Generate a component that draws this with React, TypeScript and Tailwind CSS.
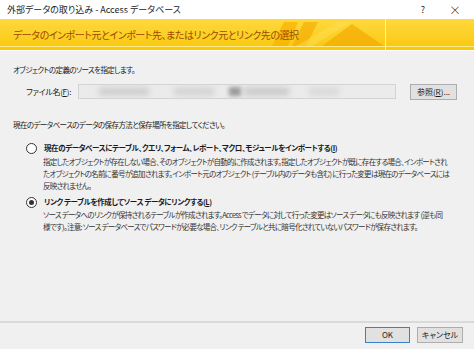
import React from 'react'

const jp = "font-['Noto_Sans_CJK_JP','Noto_Sans',sans-serif] [font-feature-settings:'palt']"

function Radio({ checked }: { checked: boolean }) {
    return (
        <div className="h-[11px] w-[11px] rounded-full border border-[#333] bg-white flex items-center justify-center shrink-0">
            {checked && <div className="h-[5px] w-[5px] rounded-full bg-[#333]" />}
        </div>
    )
}

function Banner() {
    return (
        <div className="relative h-[31px] bg-gradient-to-b from-[#ffd83a] to-[#f9c800] overflow-hidden">
            <svg className="absolute inset-0" width="474" height="31" viewBox="0 0 474 31">
                <polygon points="284,3 298,3 288,27 272,27" fill="#f7b000" opacity="0.7" />
                <polygon points="304,3 318,3 306,27 292,27" fill="#f4a800" opacity="0.6" />
                <polygon points="296,27 338,3 352,3 312,27" fill="#ffe15a" opacity="0.45" />
                <polygon points="322,27 352,5 384,27" fill="#f3a800" opacity="0.65" />
                <line x1="0" y1="27.5" x2="474" y2="27.5" stroke="#ffe98a" strokeWidth="1" />
                <line x1="385.5" y1="0" x2="385.5" y2="31" stroke="#fff3b0" strokeWidth="1" />
            </svg>
            <div className="relative pl-[13px] h-full flex items-center text-[10px] tracking-[-0.45px] text-[#9b4a00]">
                データのインポート元とインポート先、またはリンク元とリンク先の選択
            </div>
        </div>
    )
}

export default function App() {
    return (
        <div className={`w-[474px] h-[349px] bg-[#f0f0f0] flex flex-col text-[#1a1a1a] overflow-hidden ${jp}`}>
            {/* Title bar */}
            <div className="h-[19px] bg-white flex items-center pl-[7px] pr-[13px] text-[9px] text-[#222]">
                <span>外部データの取り込み - Access データベース</span>
                <span className="ml-auto mr-[24px] text-[9px]">?</span>
                <span className="text-[12px] font-light leading-none">×</span>
            </div>

            <Banner />
            <div className="h-[1px] bg-white" />

            {/* Body */}
            <div className="flex-1 flex flex-col px-[13px] pt-[13px] text-[7.5px] leading-[12px] tracking-[-0.6px] whitespace-nowrap">
                <p>オブジェクトの定義のソースを指定します。</p>

                <div className="flex items-center mt-[7px] pl-[13px] h-[17px] tracking-normal">
                    <span className="w-[52px] text-[8px] tracking-[-0.3px]">ファイル名(<u>F</u>):</span>
                    <div className="relative w-[318px] h-[15px] border border-[#d3d3d3] bg-[#ebebeb] overflow-hidden">
                        <div className="absolute left-[20px] top-[3px] h-[7px] w-[50px] bg-[#c9c9c9] blur-[3px]" />
                        <div className="absolute left-[95px] top-[3px] h-[7px] w-[40px] bg-[#cfcfcf] blur-[3px]" />
                        <div className="absolute left-[150px] top-[2px] h-[9px] w-[12px] bg-[#9a9a9a] blur-[2px]" />
                        <div className="absolute left-[165px] top-[3px] h-[7px] w-[45px] bg-[#c4c4c4] blur-[3px]" />
                        <div className="absolute left-[230px] top-[3px] h-[7px] w-[30px] bg-[#d6d6d6] blur-[3px]" />
                    </div>
                    <button className="ml-auto mr-[4px] h-[16px] w-[47px] border border-[#adadad] bg-[#e1e1e1] text-[8px] leading-none">
                        参照(<u>R</u>)...
                    </button>
                </div>

                <p className="mt-[19px]">現在のデータベースのデータの保存方法と保存場所を指定してください。</p>

                <div className="flex items-center gap-[7px] mt-[11px] pl-[13px]">
                    <Radio checked={false} />
                    <span className="font-bold tracking-[-0.4px]">現在のデータベースにテーブル、クエリ、フォーム、レポート、マクロ、モジュールをインポートする(<u>I</u>)</span>
                </div>
                <div className="pl-[30px] mt-[2px] text-[#333] tracking-[-0.72px]">
                    <p>指定したオブジェクトが存在しない場合、そのオブジェクトが自動的に作成されます。指定したオブジェクトが既に存在する場合、インポートされ</p>
                    <p>たオブジェクトの名前に番号が追加されます。インポート元のオブジェクト (テーブル内のデータも含む) に行った変更は現在のデータベースには</p>
                    <p>反映されません。</p>
                </div>

                <div className="flex items-center gap-[7px] mt-[4px] pl-[13px]">
                    <Radio checked={true} />
                    <span className="font-bold tracking-[-0.4px]">リンク テーブルを作成してソース データにリンクする(<u>L</u>)</span>
                </div>
                <div className="pl-[30px] mt-[1px] text-[#333] tracking-[-0.72px]">
                    <p>ソース データへのリンクが保持されるテーブルが作成されます。Access でデータに対して行った変更はソース データにも反映されます (逆も同</p>
                    <p>様です)。注意: ソース データベースでパスワードが必要な場合、リンク テーブルと共に暗号化されていないパスワードが保存されます。</p>
                </div>
            </div>

            {/* Footer */}
            <div className="h-[2px] bg-[#dadada]" />
            <div className="h-[26px] flex items-start justify-end gap-[7px] pt-[4px] pr-[11px] text-[8px]">
                <button className="h-[16px] w-[45px] border border-[#3b7fc4] bg-[#e1e1e1] leading-none">OK</button>
                <button className="h-[16px] w-[46px] border border-[#adadad] bg-[#e1e1e1] leading-none">キャンセル</button>
            </div>
        </div>
    )
}
